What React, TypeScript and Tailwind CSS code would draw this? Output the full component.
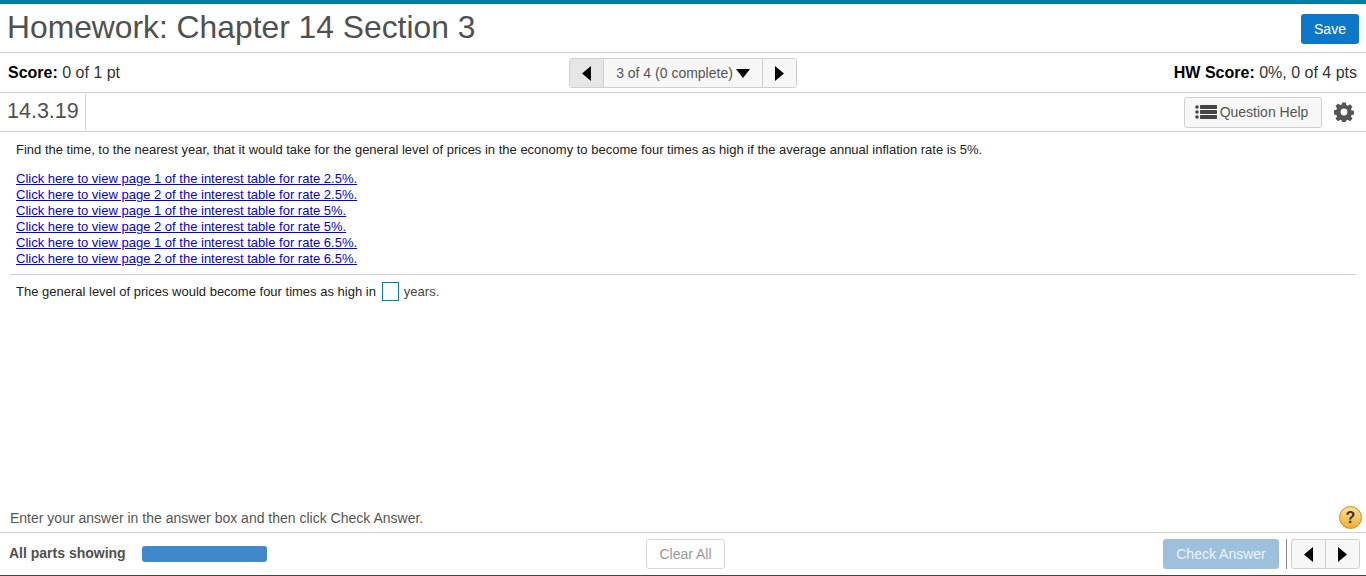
const links = [
  'Click here to view page 1 of the interest table for rate 2.5%.',
  'Click here to view page 2 of the interest table for rate 2.5%.',
  'Click here to view page 1 of the interest table for rate 5%.',
  'Click here to view page 2 of the interest table for rate 5%.',
  'Click here to view page 1 of the interest table for rate 6.5%.',
  'Click here to view page 2 of the interest table for rate 6.5%.',
];

function ArrowLeft() {
  return (
    <svg width="9" height="15" viewBox="0 0 9 15" className="block">
      <path d="M9 0V15L0 7.5Z" fill="#000" />
    </svg>
  );
}

function ArrowRight() {
  return (
    <svg width="9" height="15" viewBox="0 0 9 15" className="block">
      <path d="M0 0V15L9 7.5Z" fill="#000" />
    </svg>
  );
}

function ListIcon() {
  return (
    <svg width="22" height="14" viewBox="0 0 22 14" className="block">
      <circle cx="2" cy="2" r="1.8" fill="#444" />
      <circle cx="2" cy="7" r="1.8" fill="#444" />
      <circle cx="2" cy="12" r="1.8" fill="#444" />
      <rect x="5" y="0" width="17" height="4" rx="0.8" fill="#444" />
      <rect x="5" y="5" width="17" height="4" rx="0.8" fill="#444" />
      <rect x="5" y="10" width="17" height="4" rx="0.8" fill="#444" />
    </svg>
  );
}

function GearIcon() {
  return (
    <svg width="20" height="20" viewBox="0 0 20 20" className="block">
      <path
        fillRule="evenodd"
        fill="#555"
        d="M8.2 0.5h3.6l.5 2.6 1.5.6 2.2-1.5 2.5 2.5-1.5 2.2.6 1.5 2.6.5v3.6l-2.6.5-.6 1.5 1.5 2.2-2.5 2.5-2.2-1.5-1.5.6-.5 2.6H8.2l-.5-2.6-1.5-.6-2.2 1.5-2.5-2.5 1.5-2.2-.6-1.5-2.6-.5V8.2l2.6-.5.6-1.5-1.5-2.2 2.5-2.5 2.2 1.5 1.5-.6ZM10 6.6a3.4 3.4 0 1 0 0 6.8 3.4 3.4 0 0 0 0-6.8Z"
      />
    </svg>
  );
}

export default function App() {
  return (
    <div className="flex h-[576px] flex-col overflow-hidden border-t-4 border-b border-t-[#007fa3] border-b-[#444] bg-white font-['Liberation_Sans',Arial,sans-serif] text-[#333]">
      <header className="flex h-[49px] shrink-0 items-center justify-between border-b border-[#c9cfdf] pr-[7px] pl-[7px]">
        <h1 className="text-[31.8px] leading-none text-[#505050]">Homework: Chapter 14 Section 3</h1>
        <button className="mt-[1px] h-[30px] w-[58px] rounded-[3px] bg-[#0d78c9] text-sm text-white">Save</button>
      </header>

      <div className="relative flex h-[40px] shrink-0 items-center justify-between border-b border-[#c9cfdf] pr-[9px] pl-2 text-base text-[#333]">
        <div>
          <span className="font-bold text-black">Score:</span> 0 of 1 pt
        </div>
        <div className="absolute top-[5px] left-[569px] flex h-[30px] w-[228px] rounded-[3px] border border-[#d0d0d0] bg-[#f7f7f7]">
          <div className="flex w-[34px] items-center justify-center rounded-l-[3px] border-r border-[#d0d0d0] bg-[#e6e6e6]">
            <ArrowLeft />
          </div>
          <div className="flex flex-1 items-center justify-center gap-[3px] text-sm text-[#555]">
            3 of 4 (0 complete)
            <svg width="14" height="9" viewBox="0 0 14 9" className="block">
              <path d="M0 0H14L7 9Z" fill="#000" />
            </svg>
          </div>
          <div className="flex w-[34px] items-center justify-center border-l border-[#d0d0d0]">
            <ArrowRight />
          </div>
        </div>
        <div>
          <span className="font-bold text-black">HW Score:</span> 0%, 0 of 4 pts
        </div>
      </div>

      <div className="flex h-[39px] shrink-0 items-center justify-between border-b border-[#c9cfdf] pr-[12px]">
        <div className="mt-[1px] flex h-[36px] w-[86px] items-center self-start border-r border-[#c9cfdf] pb-[1px] pl-[7px] text-[21.5px] text-[#505050]">
          14.3.19
        </div>
        <div className="flex items-center gap-[12px]">
          <button className="flex h-[31px] w-[138px] items-center justify-center gap-[3px] rounded-[3px] border border-[#cfcfcf] bg-[#f7f7f7] pr-[3px] text-sm text-[#555]">
            <ListIcon />
            Question Help
          </button>
          <GearIcon />
        </div>
      </div>

      <main className="flex min-h-0 flex-1 flex-col px-[10px] text-[13px] text-[#222]">
        <p className="mt-[10px] pl-[6px] leading-4">
          Find the time, to the nearest year, that it would take for the general level of prices in the economy to become four times as high if the average annual inflation rate is 5%.
        </p>
        <div className="mt-[13px] flex flex-col pl-[6px] leading-4">
          {links.map((l) => (
            <a key={l} href="#" className="w-fit text-[#0000ee] underline">
              {l}
            </a>
          ))}
        </div>
        <div className="mt-[7px] border-t border-[#c9cfdf]" />
        <div className="mt-[7px] flex items-center pl-[6px]">
          <span>The general level of prices would become four times as high in</span>
          <span className="mr-[5px] ml-[6px] h-[19px] w-[17px] border border-[#007fa3] bg-white" />
          <span className="text-[#444]">years.</span>
        </div>
        <div className="mt-auto flex h-[29px] items-center justify-between text-sm text-[#555]">
          <span>Enter your answer in the answer box and then click Check Answer.</span>
          <span className="flex h-[23px] w-[23px] translate-x-[6px] items-center justify-center rounded-full border border-[#c98a1a] bg-gradient-to-b from-[#fbe08a] to-[#efb02f] text-base font-bold text-[#333]">
            ?
          </span>
        </div>
      </main>

      <footer className="relative flex h-[43px] shrink-0 items-center justify-between border-t border-[#c9cfdf] pr-[6px] pl-[9px]">
        <div className="flex items-center">
          <span className="w-[133px] pb-[2px] text-sm font-bold text-[#505050]">All parts showing</span>
          <div className="h-4 w-[125px] rounded-[3px] bg-[#3f88c9]" />
        </div>
        <button className="absolute top-[6px] left-[646px] h-[30px] w-[79px] rounded-[3px] border border-[#d8d8d8] bg-white text-sm text-[#999]">
          Clear All
        </button>
        <div className="flex items-center">
          <button className="h-[30px] w-[116px] rounded-[3px] bg-[#9dc1dd] text-sm text-[#eef4f9]">Check Answer</button>
          <div className="mr-[4px] ml-[7px] h-[30px] w-px bg-[#888]" />
          <div className="flex h-[30px] w-[69px] rounded-[3px] border border-[#d0d0d0] bg-[#f7f7f7]">
            <div className="flex flex-1 items-center justify-center border-r border-[#d0d0d0]">
              <ArrowLeft />
            </div>
            <div className="flex flex-1 items-center justify-center">
              <ArrowRight />
            </div>
          </div>
        </div>
      </footer>
    </div>
  );
}
